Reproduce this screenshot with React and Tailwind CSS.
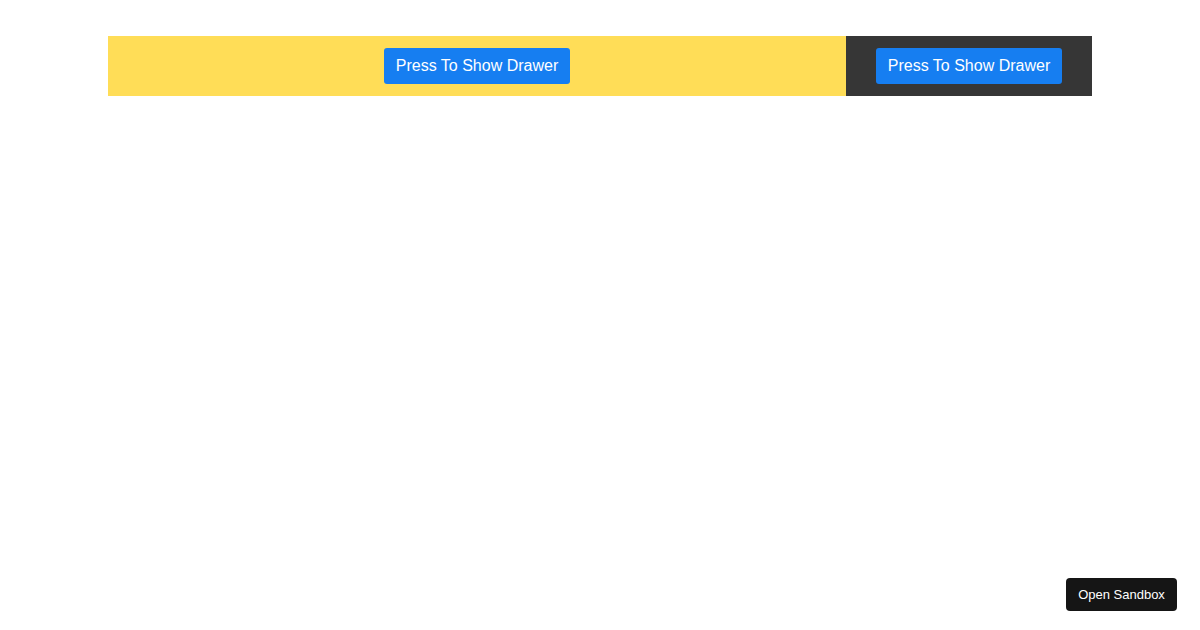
export default function App() {
  const font = { fontFamily: '"Liberation Sans", Arial, sans-serif' };
  return (
    <div className="min-h-screen bg-white" style={font}>
      <div className="mx-[108px] pt-[36px]">
        <div className="flex h-[60px]">
          <div className="flex w-3/4 items-center justify-center bg-[#ffdd57]">
            <button className="h-[36px] w-[186px] rounded-[3px] bg-[#167ef1] text-[16px] text-white">
              Press To Show Drawer
            </button>
          </div>
          <div className="flex w-1/4 items-center justify-center bg-[#363636]">
            <button className="h-[36px] w-[186px] rounded-[3px] bg-[#167ef1] text-[16px] text-white">
              Press To Show Drawer
            </button>
          </div>
        </div>
      </div>
      <button className="fixed bottom-[19px] right-[23px] h-[33px] w-[111px] rounded-[4px] bg-[#151515] text-[13px] text-white">
        Open Sandbox
      </button>
    </div>
  );
}
